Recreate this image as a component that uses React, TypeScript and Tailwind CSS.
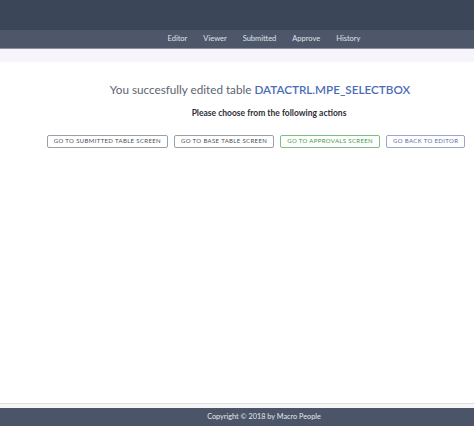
const NAV = ["Editor", "Viewer", "Submitted", "Approve", "History"];

const ACTIONS = [
  { label: "Go to submitted table screen", tone: "border-[#9aa0a8] text-[#4a4f57]" },
  { label: "Go to base table screen", tone: "border-[#9aa0a8] text-[#4a4f57]" },
  { label: "Go to approvals screen", tone: "border-[#7fbf86] text-[#3f9a4a]" },
  { label: "Go back to editor", tone: "border-[#9aa6cf] text-[#5a6aa6]" },
];

export default function App() {
  return (
    <div className="flex h-[426px] w-[474px] flex-col overflow-hidden bg-white font-['Lato','Open_Sans',sans-serif]">
      <header className="h-[30px] bg-[#3b4658]" />
      <nav className="flex h-[19px] items-center justify-center gap-[16px] border-b border-[#8a90a0] bg-[#4d5769] pl-[54px] text-[7.5px] text-[#dfe3ea]">
        {NAV.map((n) => (
          <span key={n}>{n}</span>
        ))}
      </nav>
      <div className="h-[13px] bg-[#f7f4fc]" />

      <main className="flex flex-1 flex-col items-center">
        <h1 className="mt-[20px] pl-[46px] text-[11.7px] leading-[14px] text-[#5b6472]">
          You succesfully edited table{" "}
          <span className="font-semibold text-[#4b6cb7]">DATACTRL.MPE_SELECTBOX</span>
        </h1>
        <p className="mt-[11px] pl-[64px] text-[8.5px] font-bold text-[#2d3038]">
          Please choose from the following actions
        </p>
        <div className="mt-[15px] flex gap-[6px] pl-[38px]">
          {ACTIONS.map((a) => (
            <button
              key={a.label}
              className={`h-[13px] shrink-0 whitespace-nowrap rounded-[2px] border bg-white px-[6px] text-[6px] uppercase leading-none tracking-[0.06em] ${a.tone}`}
            >
              {a.label}
            </button>
          ))}
        </div>
      </main>

      <div className="h-[5px] border-t border-[#dcdde3] bg-[#f5f5f8]" />
      <footer className="flex h-[18px] items-center justify-center bg-[#4b5567] pl-[54px] text-[7.3px] text-[#e4e7ee]">
        Copyright © 2018 by Macro People
      </footer>
    </div>
  );
}
